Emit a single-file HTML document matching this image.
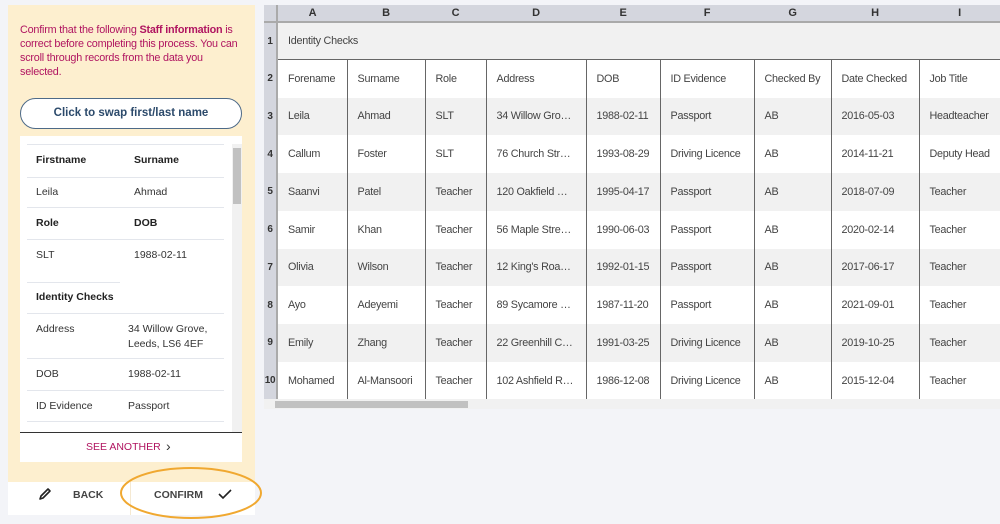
<!DOCTYPE html>
<html><head><meta charset="utf-8"><style>
*{box-sizing:border-box;margin:0;padding:0}
body{width:1000px;height:524px;background:#f3f4f8;font-family:"Liberation Sans",sans-serif;position:relative;overflow:hidden;color:#333}
.abs{position:absolute}
#panel{left:8px;top:5px;width:247px;height:477px;background:#fdefcf}
.msg{left:20px;top:23px;width:235px;font-size:10.8px;line-height:14px;color:#b01460;letter-spacing:-0.2px;white-space:nowrap}
.btn{left:20px;top:98px;width:222px;height:31px;border:1px solid #4d6a88;border-radius:16px;background:#fff;color:#2c4a6b;font-size:11.5px;font-weight:bold;text-align:center;line-height:29px}
.card{left:20px;top:136px;width:222px;height:326px;background:#fff}
.r{position:absolute;left:7px;width:197px;font-size:10.5px;color:#333}
.ln{position:absolute;left:7px;width:197px;height:1px;background:#e3e6ec}
.c2{position:absolute;left:98px}
b{font-weight:bold;color:#222}
#grid{left:264px;top:5px;width:736px}
table{border-collapse:collapse;font-size:10.8px;color:#444;table-layout:fixed;letter-spacing:-0.25px}
td{height:37.75px;padding-left:10px;white-space:nowrap;overflow:hidden;border-left:1px solid #666}
tr.h td{height:17px;background:#d4d6de;text-align:center;padding:0;font-weight:bold;font-size:11px;color:#333;border-left:none;border-bottom:2px solid #aaa}
td.rn{background:#d4d6de;padding:0;text-align:center;font-weight:bold;border-left:none;border-right:2px solid #aaa;font-size:10px;color:#333}
tr.g td:not(.rn){background:#f1f1f1}
tr.w td:not(.rn){background:#fff}
</style></head><body>
<div id="panel" class="abs"></div>
<div class="abs msg">Confirm that the following <b style="color:#b01460">Staff information</b> is<br>correct before completing this process. You can<br>scroll through records from the data you<br>selected.</div>
<div class="abs btn">Click to swap first/last name</div>
<div class="abs card">
 <div class="ln" style="top:8px"></div>
 <div class="r" style="top:18px;left:16px"><b>Firstname</b><span class="c2"><b>Surname</b></span></div>
 <div class="ln" style="top:41px"></div>
 <div class="r" style="top:50px;left:16px">Leila<span class="c2">Ahmad</span></div>
 <div class="ln" style="top:71px"></div>
 <div class="r" style="top:81px;left:16px"><b>Role</b><span class="c2"><b>DOB</b></span></div>
 <div class="ln" style="top:103px"></div>
 <div class="r" style="top:113px;left:16px">SLT<span class="c2">1988-02-11</span></div>
 <div class="ln" style="top:146px;width:93px"></div>
 <div class="r" style="top:155px;left:16px"><b>Identity Checks</b></div>
 <div class="ln" style="top:177px"></div>
 <div class="r" style="top:186px;left:16px;line-height:15px">Address<span class="c2" style="left:92px">34 Willow Grove,<br>Leeds, LS6 4EF</span></div>
 <div class="ln" style="top:222px"></div>
 <div class="r" style="top:232px;left:16px">DOB<span class="c2" style="left:92px">1988-02-11</span></div>
 <div class="ln" style="top:254px"></div>
 <div class="r" style="top:264px;left:16px">ID Evidence<span class="c2" style="left:92px">Passport</span></div>
 <div class="ln" style="top:285px"></div>
 <div class="abs" style="left:212px;top:8px;width:10px;height:288px;background:#f1f1f1"></div>
 <div class="abs" style="left:213px;top:12px;width:8px;height:56px;background:#c1c1c1"></div>
 <div class="abs" style="left:0;top:296px;width:222px;height:1px;background:#333"></div>
 <div class="abs" style="left:66px;top:305px;font-size:10.5px;color:#b01460">SEE ANOTHER</div>
 <div class="abs" style="left:146px;top:302px;font-size:14px;color:#333">›</div>
</div>
<div class="abs" style="left:8px;top:482px;width:247px;height:33px;background:#fff"></div>
<div class="abs" style="left:130px;top:482px;width:1px;height:33px;background:#f5e9d2"></div>
<svg class="abs" style="left:38px;top:487px" width="14" height="14" viewBox="0 0 14 14"><path d="M2 12 L3 9 L10 2 L12 4 L5 11 Z M2 12 L5 11" fill="none" stroke="#222" stroke-width="1.6" stroke-linejoin="round"/></svg>
<div class="abs" style="left:73px;top:489px;font-size:10.5px;font-weight:bold;color:#444">BACK</div>
<div class="abs" style="left:154px;top:489px;font-size:10.5px;font-weight:bold;color:#444">CONFIRM</div>
<svg class="abs" style="left:218px;top:488px" width="14" height="12" viewBox="0 0 14 12"><path d="M1 6 L5 10 L13 2" fill="none" stroke="#222" stroke-width="1.6"/></svg>
<svg class="abs" style="left:118px;top:465px" width="146" height="56"><ellipse cx="73" cy="28" rx="70" ry="25" fill="none" stroke="#f0a830" stroke-width="2"/></svg>

<div id="grid" class="abs">
<table>
<colgroup><col style="width:13px"><col style="width:70px"><col style="width:78px"><col style="width:61px"><col style="width:100px"><col style="width:74px"><col style="width:94px"><col style="width:77px"><col style="width:88px"><col style="width:81px"></colgroup>
<tr class="h"><td style="border-right:2px solid #aaa"></td><td>A</td><td>B</td><td>C</td><td>D</td><td>E</td><td>F</td><td>G</td><td>H</td><td>I</td></tr>
<tr class="g"><td class="rn">1</td><td colspan="9" style="border-left:none;border-bottom:1px solid #666">Identity Checks</td></tr>
<tr class="w"><td class="rn">2</td><td style="border-left:none">Forename</td><td>Surname</td><td>Role</td><td>Address</td><td>DOB</td><td>ID Evidence</td><td>Checked By</td><td>Date Checked</td><td>Job Title</td></tr>
<tr class="g"><td class="rn">3</td><td style="border-left:none">Leila</td><td>Ahmad</td><td>SLT</td><td>34 Willow Gro…</td><td>1988-02-11</td><td>Passport</td><td>AB</td><td>2016-05-03</td><td>Headteacher</td></tr>
<tr class="w"><td class="rn">4</td><td style="border-left:none">Callum</td><td>Foster</td><td>SLT</td><td>76 Church Str…</td><td>1993-08-29</td><td>Driving Licence</td><td>AB</td><td>2014-11-21</td><td>Deputy Head</td></tr>
<tr class="g"><td class="rn">5</td><td style="border-left:none">Saanvi</td><td>Patel</td><td>Teacher</td><td>120 Oakfield …</td><td>1995-04-17</td><td>Passport</td><td>AB</td><td>2018-07-09</td><td>Teacher</td></tr>
<tr class="w"><td class="rn">6</td><td style="border-left:none">Samir</td><td>Khan</td><td>Teacher</td><td>56 Maple Stre…</td><td>1990-06-03</td><td>Passport</td><td>AB</td><td>2020-02-14</td><td>Teacher</td></tr>
<tr class="g"><td class="rn">7</td><td style="border-left:none">Olivia</td><td>Wilson</td><td>Teacher</td><td>12 King's Roa…</td><td>1992-01-15</td><td>Passport</td><td>AB</td><td>2017-06-17</td><td>Teacher</td></tr>
<tr class="w"><td class="rn">8</td><td style="border-left:none">Ayo</td><td>Adeyemi</td><td>Teacher</td><td>89 Sycamore …</td><td>1987-11-20</td><td>Passport</td><td>AB</td><td>2021-09-01</td><td>Teacher</td></tr>
<tr class="g"><td class="rn">9</td><td style="border-left:none">Emily</td><td>Zhang</td><td>Teacher</td><td>22 Greenhill C…</td><td>1991-03-25</td><td>Driving Licence</td><td>AB</td><td>2019-10-25</td><td>Teacher</td></tr>
<tr class="w"><td class="rn">10</td><td style="border-left:none">Mohamed</td><td>Al-Mansoori</td><td>Teacher</td><td>102 Ashfield R…</td><td>1986-12-08</td><td>Driving Licence</td><td>AB</td><td>2015-12-04</td><td>Teacher</td></tr>
</table>
</div>
<div class="abs" style="left:264px;top:399px;width:736px;height:10px;background:#f1f1f1"></div>
<div class="abs" style="left:275px;top:401px;width:193px;height:7px;background:#c1c1c1"></div>
</body></html>
